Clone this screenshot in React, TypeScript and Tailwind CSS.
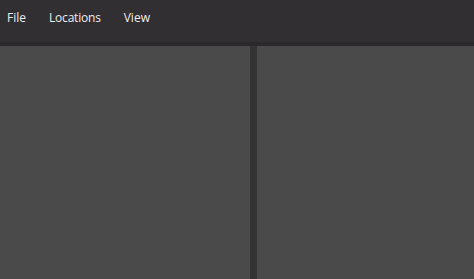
export default function App() {
  return (
    <div className="w-[474px] h-[279px] flex flex-col bg-[#2e2b2f] overflow-hidden font-['Open_Sans',sans-serif]">
      {/* Menu bar */}
      <div className="h-[42px] flex items-start pt-[9px] bg-[#322f33] text-[12px] text-[#ececec]">
        <span className="ml-[7px]">File</span>
        <span className="ml-[23px] tracking-[-0.2px]">Locations</span>
        <span className="ml-[23px]">View</span>
      </div>
      <div className="h-[4px] bg-[#2b282c]" />
      {/* Panels */}
      <div className="flex-1 flex">
        <div className="w-[250px] bg-[#4a4a4a]" />
        <div className="w-[7px] bg-[#333333]" />
        <div className="flex-1 bg-[#4a4a4a]" />
      </div>
    </div>
  );
}
